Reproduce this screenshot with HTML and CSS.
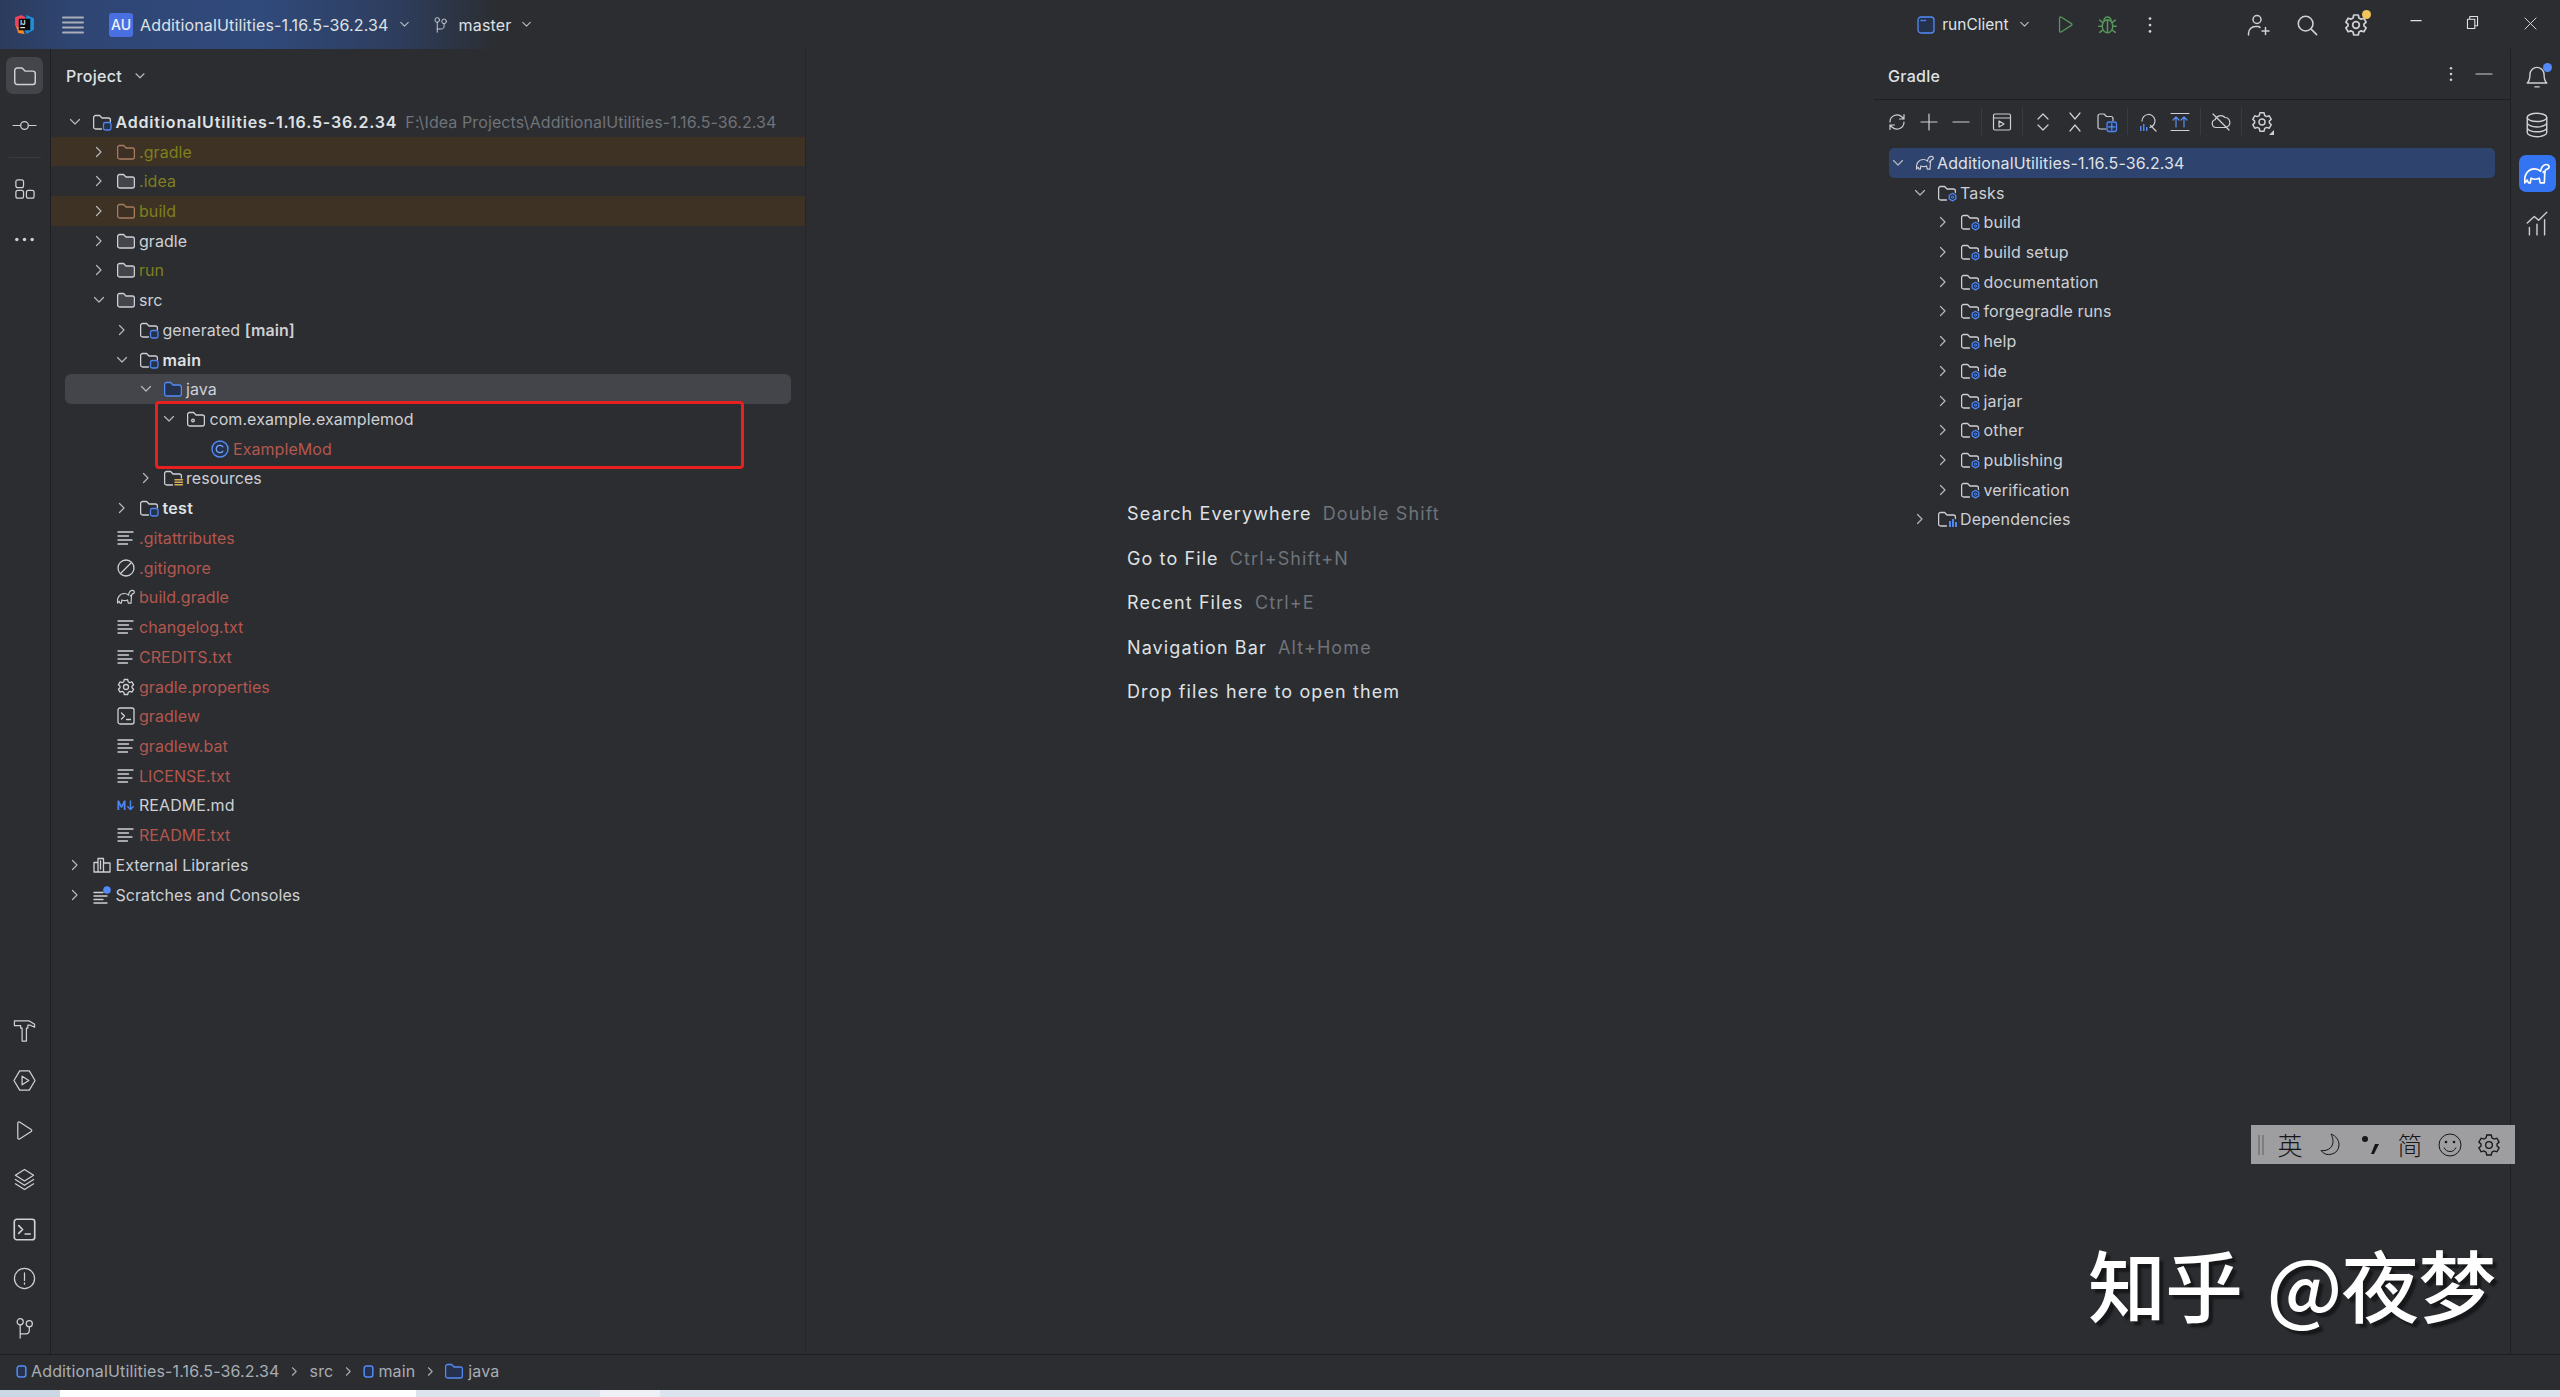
FILE: index.html
```html
<!DOCTYPE html>
<html lang="en">
<head>
<meta charset="utf-8">
<title>AdditionalUtilities</title>
<link rel="stylesheet" href="styles.css">
</head>
<body>
<svg class="defs" xmlns="http://www.w3.org/2000/svg">
  <symbol id="chev-r" viewBox="0 0 18 18"><path d="M6.500 4.500 11 9l-4.500 4.500"/></symbol>
  <symbol id="chev-d" viewBox="0 0 18 18"><path d="M4.500 6.500 9 11l4.500-4.500"/></symbol>
  <symbol id="folder" viewBox="0 0 18 18"><path d="M.6 4.500a2 2 0 0 1 2-2h4L9 5h6.400a2 2 0 0 1 2 2v7a2 2 0 0 1-2 2H2.600a2 2 0 0 1-2-2z"/></symbol>
  <symbol id="mod" viewBox="0 0 20 18"><path d="M8.500 16H2.600a2 2 0 0 1-2-2V4.500a2 2 0 0 1 2-2h4L9 5h6.400a2 2 0 0 1 2 2v1.500"/><rect class="blue" x="10.500" y="9.500" width="7.500" height="7.500" rx="1.800"/></symbol>
  <symbol id="task" viewBox="0 0 20 18"><path d="M8.500 16H2.600a2 2 0 0 1-2-2V4.500a2 2 0 0 1 2-2h4L9 5h6.400a2 2 0 0 1 2 2v1.500"/><path class="blue" d="M14.500 9.300l3.300 1.900v3.800l-3.300 1.900-3.300-1.900v-3.800z"/><circle class="bluedot" cx="14.500" cy="13.100" r="1.100"/></symbol>
  <symbol id="dep" viewBox="0 0 20 18"><path d="M8.500 16H2.600a2 2 0 0 1-2-2V4.500a2 2 0 0 1 2-2h4L9 5h6.400a2 2 0 0 1 2 2v1.500"/><path class="bluebar" d="M11 11h2v6h-2zM14 9h2v8h-2zM17 12h2v5h-2z"/></symbol>
  <symbol id="res" viewBox="0 0 20 18"><path d="M8.500 16H2.600a2 2 0 0 1-2-2V4.500a2 2 0 0 1 2-2h4L9 5h6.400a2 2 0 0 1 2 2v2"/><path class="yellow" d="M11 10.800h7.500M11 13.300h7.500M11 15.800h7.500"/></symbol>
  <symbol id="pkg" viewBox="0 0 18 18"><path d="M.6 4.500a2 2 0 0 1 2-2h4L9 5h6.400a2 2 0 0 1 2 2v7a2 2 0 0 1-2 2H2.600a2 2 0 0 1-2-2z"/><circle cx="6" cy="10.500" r="1.300"/></symbol>
  <symbol id="cls" viewBox="0 0 18 18"><circle class="cls-o" cx="9" cy="9" r="8"/><path class="cls-c" d="M11.800 6.700A3.700 3.700 0 1 0 11.800 11.300"/></symbol>
  <symbol id="txt" viewBox="0 0 18 18"><path d="M1 3h15M1 7h10.500M1 11h14M1 15h9.500"/></symbol>
  <symbol id="ban" viewBox="0 0 18 18"><circle cx="9" cy="9" r="8"/><path d="M3.500 14.500l11-11"/></symbol>
  <symbol id="ele" viewBox="2 4 20.500 17"><path d="M2.500 19.500C2 13 5 8.500 10.500 8.500c2 0 3.500.8 4.500 1.800C15.800 7 17.500 5 19.500 5c1.700 0 2.700 1.400 2 2.800-.5 1-2 .7-2.600 1.700-.9 1.700-.4 5-.9 10h-3.200l-.8-3.700c-2 1-4.500 1-6.500 0l-.5 3.700H5.500l-1-2.200z"/><circle cx="17.500" cy="11" r=".4"/></symbol>
  <symbol id="gear" viewBox="0 0 18 18"><path d="M7.300 1.500h3.400l.5 2.200 1.600.9 2.100-.7 1.700 2.900L15 8.300v1.400l1.600 1.500-1.700 2.900-2.100-.7-1.600.9-.5 2.200H7.300l-.5-2.200-1.600-.9-2.100.7-1.700-2.900L3 9.700V8.300L1.400 6.800l1.700-2.900 2.100.7 1.600-.9z"/><circle cx="9" cy="9" r="2.500"/></symbol>
  <symbol id="term" viewBox="0 0 18 18"><rect x="1" y="1" width="16" height="16" rx="2"/><path d="M4.500 6l3 3-3 3M9.500 12.500h4"/></symbol>
  <symbol id="branch" viewBox="0 0 18 24"><circle cx="4.500" cy="5" r="3.200"/><circle cx="14" cy="7" r="3.200"/><path d="M4.500 8.200V22M4.500 17.500h6c2.500 0 3.500-2 3.500-4v-3.300"/></symbol>
  <symbol id="dots" viewBox="0 0 6 24"><circle class="solid" cx="3" cy="5" r="1.500"/><circle class="solid" cx="3" cy="12" r="1.500"/><circle class="solid" cx="3" cy="19" r="1.500"/></symbol>
  <symbol id="play" viewBox="0 0 20 24"><path d="M3 4.200v15.600c0 1 1 1.500 1.800 1L17 13c.8-.5.800-1.500 0-2L4.800 3.200c-.8-.5-1.800 0-1.800 1z"/></symbol>
</svg>

<div class="app">
  <header class="titlebar">
    <svg class="logo" viewBox="0 0 20 20"><path class="l-a" d="M1 3l6-2 4 2-2 9-5 3-3-4z"/><path class="l-b" d="M12 1l7 3v11l-7 4-2-4z"/><path class="l-c" d="M2 12l6 1 2 6-6-1z"/><rect class="l-d" x="4.500" y="4.500" width="11" height="11"/><text class="l-t" x="6" y="10.500">IJ</text><rect class="l-e" x="6" y="12.500" width="4.500" height="1"/></svg>
    <svg class="burger" viewBox="0 0 20 18"><path d="M0 1.500h20M0 6.500h20M0 11.500h20M0 16.500h20"/></svg>
    <span class="badge">AU</span>
    <span class="title-text project-name">AdditionalUtilities-1.16.5-36.2.34</span>
    <svg class="ico tchev"><use href="#chev-d"/></svg>
    <svg class="ico tbranch"><use href="#branch"/></svg>
    <span class="title-text">master</span>
    <svg class="ico tchev"><use href="#chev-d"/></svg>
    <div class="title-right">
      <svg class="runcfg" viewBox="0 0 18 18"><rect x="1" y="1" width="16" height="16" rx="3"/><path d="M4 4.500h1.500M7 4.500h1.500"/></svg>
      <span class="title-text run-name">runClient</span>
      <svg class="ico tchev"><use href="#chev-d"/></svg>
      <svg class="ico tplay"><use href="#play"/></svg>
      <svg class="tbug" viewBox="0 0 24 24"><ellipse cx="12" cy="14" rx="6" ry="7.500"/><path d="M8 7.500a4 4 0 0 1 8 0M12 7v14M6 14H2M22 14h-4M6.500 9.500 3 7M17.500 9.500 21 7M6.500 18.500 3 21M17.500 18.500 21 21"/></svg>
      <svg class="ico tdots"><use href="#dots"/></svg>
      <svg class="tadd" viewBox="0 0 24 24"><circle cx="11" cy="6.500" r="4"/><path d="M2.500 22v-1.500c0-4 3-7 7-7h2.500c1 0 1.500.3 2 1M16 18h7M19.500 14.500v7"/></svg>
      <svg class="tsearch" viewBox="0 0 24 24"><circle cx="10.500" cy="10.500" r="8"/><path d="M16.500 16.500l6 6"/></svg>
      <span class="gear-wrap"><svg class="ico tgear"><use href="#gear"/></svg><i class="dot-y"></i></span>
      <svg class="wmin" viewBox="0 0 12 12"><path d="M0 3.500h11"/></svg>
      <svg class="wres" viewBox="0 0 12 14"><path d="M.5 3.500h8v10h-8zM3 3.500V.5h8.500v10H8.500"/></svg>
      <svg class="wclose" viewBox="0 0 14 14"><path d="M1 1l12 12M13 1L1 13"/></svg>
    </div>
  </header>

  <div class="workspace">
    <nav class="stripe stripe-left">
      <span class="sbtn on"><svg class="ico s-folder"><use href="#folder"/></svg></span>
      <span class="sbtn"><svg class="sic" viewBox="0 0 24 24"><circle cx="12" cy="12" r="4"/><path d="M0 12h8M16 12h8"/></svg></span>
      <i class="sline"></i>
      <span class="sbtn"><svg class="sic" viewBox="0 0 24 24"><rect x="3" y="2" width="8" height="8" rx="2"/><rect x="3" y="13" width="8" height="8" rx="2"/><rect x="14" y="13" width="8" height="8" rx="2"/></svg></span>
      <span class="sbtn"><svg class="sic" viewBox="0 0 24 24"><circle class="solid" cx="4" cy="12" r="1.800"/><circle class="solid" cx="12" cy="12" r="1.800"/><circle class="solid" cx="20" cy="12" r="1.800"/></svg></span>
      <div class="stripe-bottom">
        <span class="sbtn"><svg class="sic" viewBox="0 0 24 24"><path d="M1.500 2h15.500l5.500 3.500v3L18 6.500h-2.500v3H14V23H9.500V9.500H8V7H1.500z"/></svg></span>
        <span class="sbtn"><svg class="sic" viewBox="0 0 24 24"><path d="M7 2h10l6 10-6 10H7L1 12z"/><path d="M9.500 7.500v9l7-4.500z"/></svg></span>
        <span class="sbtn"><svg class="ico sic"><use href="#play"/></svg></span>
        <span class="sbtn"><svg class="sic" viewBox="0 0 24 24"><path d="M12 1.500l9.500 6-9.500 6-9.500-6zM2.500 12l9.500 6 9.500-6M2.500 16.500l9.500 6 9.500-6"/></svg></span>
        <span class="sbtn"><svg class="ico sic"><use href="#term"/></svg></span>
        <span class="sbtn"><svg class="sic" viewBox="0 0 24 24"><circle cx="12" cy="12" r="10.500"/><path d="M12 6v8M12 16.500v1.500"/></svg></span>
        <span class="sbtn"><svg class="ico sic"><use href="#branch"/></svg></span>
      </div>
    </nav>

    <section class="project">
      <div class="panel-head"><span class="panel-title">Project</span><svg class="ico phead-chev"><use href="#chev-d"/></svg></div>
      <div class="tree">
        <div class="row d0 strong root"><svg class="ico chev"><use href="#chev-d"/></svg><svg class="ico nod w20"><use href="#mod"/></svg><span class="lbl">AdditionalUtilities-1.16.5-36.2.34</span><span class="path">F:\Idea Projects\AdditionalUtilities-1.16.5-36.2.34</span></div>
        <div class="row d1 excl"><svg class="ico chev"><use href="#chev-r"/></svg><svg class="ico nod fold-x"><use href="#folder"/></svg><span class="lbl ign">.gradle</span></div>
        <div class="row d1"><svg class="ico chev"><use href="#chev-r"/></svg><svg class="ico nod fold"><use href="#folder"/></svg><span class="lbl ign">.idea</span></div>
        <div class="row d1 excl"><svg class="ico chev"><use href="#chev-r"/></svg><svg class="ico nod fold-x"><use href="#folder"/></svg><span class="lbl ign">build</span></div>
        <div class="row d1"><svg class="ico chev"><use href="#chev-r"/></svg><svg class="ico nod fold"><use href="#folder"/></svg><span class="lbl">gradle</span></div>
        <div class="row d1"><svg class="ico chev"><use href="#chev-r"/></svg><svg class="ico nod fold"><use href="#folder"/></svg><span class="lbl ign">run</span></div>
        <div class="row d1"><svg class="ico chev"><use href="#chev-d"/></svg><svg class="ico nod fold"><use href="#folder"/></svg><span class="lbl">src</span></div>
        <div class="row d2"><svg class="ico chev"><use href="#chev-r"/></svg><svg class="ico nod w20"><use href="#mod"/></svg><span class="lbl">generated <b class="strong-b">[main]</b></span></div>
        <div class="row d2 strong"><svg class="ico chev"><use href="#chev-d"/></svg><svg class="ico nod w20"><use href="#mod"/></svg><span class="lbl">main</span></div>
        <div class="row d3 sel"><svg class="ico chev"><use href="#chev-d"/></svg><svg class="ico nod fold-src"><use href="#folder"/></svg><span class="lbl">java</span></div>
        <div class="row d4"><svg class="ico chev"><use href="#chev-d"/></svg><svg class="ico nod"><use href="#pkg"/></svg><span class="lbl">com.example.examplemod</span></div>
        <div class="row d5 leaf"><svg class="ico nod"><use href="#cls"/></svg><span class="lbl mod-r">ExampleMod</span></div>
        <div class="row d3"><svg class="ico chev"><use href="#chev-r"/></svg><svg class="ico nod w20"><use href="#res"/></svg><span class="lbl">resources</span></div>
        <div class="row d2 strong"><svg class="ico chev"><use href="#chev-r"/></svg><svg class="ico nod w20"><use href="#mod"/></svg><span class="lbl">test</span></div>
        <div class="row d1 leaf"><svg class="ico nod"><use href="#txt"/></svg><span class="lbl mod-r">.gitattributes</span></div>
        <div class="row d1 leaf"><svg class="ico nod"><use href="#ban"/></svg><span class="lbl mod-r">.gitignore</span></div>
        <div class="row d1 leaf"><svg class="ico nod"><use href="#ele"/></svg><span class="lbl mod-r">build.gradle</span></div>
        <div class="row d1 leaf"><svg class="ico nod"><use href="#txt"/></svg><span class="lbl mod-r">changelog.txt</span></div>
        <div class="row d1 leaf"><svg class="ico nod"><use href="#txt"/></svg><span class="lbl mod-r">CREDITS.txt</span></div>
        <div class="row d1 leaf"><svg class="ico nod"><use href="#gear"/></svg><span class="lbl mod-r">gradle.properties</span></div>
        <div class="row d1 leaf"><svg class="ico nod"><use href="#term"/></svg><span class="lbl mod-r">gradlew</span></div>
        <div class="row d1 leaf"><svg class="ico nod"><use href="#txt"/></svg><span class="lbl mod-r">gradlew.bat</span></div>
        <div class="row d1 leaf"><svg class="ico nod"><use href="#txt"/></svg><span class="lbl mod-r">LICENSE.txt</span></div>
        <div class="row d1 leaf"><svg class="nod md" viewBox="0 0 20 18"><path class="md-m" d="M.5 14.500V4h1.800L5 9.500 7.700 4h1.800v10.500H7.500V8.500L5.700 12H4.300L2.500 8.500v6z"/><path class="md-a" d="M15 4v10M11.500 10.500 15 14l3.500-3.500"/></svg><span class="lbl">README.md</span></div>
        <div class="row d1 leaf"><svg class="ico nod"><use href="#txt"/></svg><span class="lbl mod-r">README.txt</span></div>
        <div class="row d0"><svg class="ico chev"><use href="#chev-r"/></svg><svg class="nod ico" viewBox="0 0 18 18"><path d="M1 16V6.500h4V16M5 16V2.500h5.500V16M10.500 16V7H17v9zM1 16h16M7.500 5v8"/></svg><span class="lbl">External Libraries</span></div>
        <div class="row d0"><svg class="ico chev"><use href="#chev-r"/></svg><svg class="nod ico" viewBox="0 0 18 18"><path d="M1 6.500h9M1 10h13M1 13.500h9M1 17h13"/><circle class="cloc" cx="14" cy="4" r="3.800"/></svg><span class="lbl">Scratches and Consoles</span></div>
      </div>
      <div class="redbox"></div>
    </section>

    <main class="editor">
      <p class="hint">Search Everywhere <span class="key">Double Shift</span></p>
      <p class="hint">Go to File <span class="key">Ctrl+Shift+N</span></p>
      <p class="hint">Recent Files <span class="key">Ctrl+E</span></p>
      <p class="hint">Navigation Bar <span class="key">Alt+Home</span></p>
      <p class="hint">Drop files here to open them</p>
    </main>

    <section class="gradle">
      <div class="panel-head gradle-head"><span class="panel-title">Gradle</span><svg class="ico ghead-dots"><use href="#dots"/></svg><svg class="ghead-min" viewBox="0 0 16 2"><path d="M0 1h16"/></svg></div>
      <div class="gtool">
        <span class="tbtn"><svg class="tic" viewBox="0 0 20 20"><path d="M3 10a7 7 0 0 1 12-5l2 2M17 10a7 7 0 0 1-12 5l-2-2M17 2.500V7h-4.500M3 17.500V13h4.500"/></svg></span>
        <span class="tbtn"><svg class="tic" viewBox="0 0 20 20"><path d="M2 10h16M10 2v16"/></svg></span>
        <span class="tbtn"><svg class="tic" viewBox="0 0 20 20"><path d="M2 10h16"/></svg></span>
        <i class="tsep"></i>
        <span class="tbtn"><svg class="tic" viewBox="0 0 20 20"><rect x="1.500" y="2" width="17" height="16" rx="1.500"/><path d="M1.500 6h17M7 9v6l5-3z"/></svg></span>
        <i class="tsep"></i>
        <span class="tbtn"><svg class="tic" viewBox="0 0 20 20"><path d="M5 7l5-5 5 5M5 13l5 5 5-5"/></svg></span>
        <span class="tbtn"><svg class="tic" viewBox="0 0 20 20"><path d="M5 1l5 6 5-6M5 19l5-6 5 6"/></svg></span>
        <span class="tbtn"><svg class="tic" viewBox="0 0 20 20"><path d="M9 17H3a2 2 0 0 1-2-2V4a2 2 0 0 1 2-2h4l2.500 2.500H14a2 2 0 0 1 2 2v2"/><rect class="blue" x="10" y="10" width="9.500" height="9.500" rx="2"/><path class="bluel" d="M14.800 11.500v6.500M11.500 14.800H18"/></svg></span>
        <i class="tsep"></i>
        <span class="tbtn"><svg class="tic" viewBox="0 0 20 20"><path d="M4 9a6.500 6.500 0 1 1 8 6.300M12.500 13.500l5.500 5.500"/><path class="bluebar" d="M2 14h1.500v5H2zM5 12h1.500v7H5zM8 15h1.500v4H8z"/></svg></span>
        <span class="tbtn"><svg class="tic" viewBox="0 0 20 20"><path d="M1 1.500h18M1 18.500h18"/><path class="bluel" d="M6 15V5M3 8l3-3 3 3M14 15V5M11 8l3-3 3 3"/></svg></span>
        <i class="tsep"></i>
        <span class="tbtn"><svg class="tic" viewBox="0 0 20 20"><path d="M5 15.500a4 4 0 0 1-1-7.800A6 6 0 0 1 14 5.500a5 5 0 0 1 2 9.500c-.5.300-1 .5-1.500.5zM2 2l16 16"/></svg></span>
        <i class="tsep"></i>
        <span class="tbtn tgearbtn"><svg class="ico tic"><use href="#gear"/></svg><i class="tcorner"></i></span>
      </div>
      <div class="gtree">
        <div class="grow g0 gsel"><svg class="ico chev"><use href="#chev-d"/></svg><svg class="ico nod"><use href="#ele"/></svg><span class="lbl">AdditionalUtilities-1.16.5-36.2.34</span></div>
        <div class="grow g1"><svg class="ico chev"><use href="#chev-d"/></svg><svg class="ico nod w20"><use href="#task"/></svg><span class="lbl">Tasks</span></div>
        <div class="grow g2"><svg class="ico chev"><use href="#chev-r"/></svg><svg class="ico nod w20"><use href="#task"/></svg><span class="lbl">build</span></div>
        <div class="grow g2"><svg class="ico chev"><use href="#chev-r"/></svg><svg class="ico nod w20"><use href="#task"/></svg><span class="lbl">build setup</span></div>
        <div class="grow g2"><svg class="ico chev"><use href="#chev-r"/></svg><svg class="ico nod w20"><use href="#task"/></svg><span class="lbl">documentation</span></div>
        <div class="grow g2"><svg class="ico chev"><use href="#chev-r"/></svg><svg class="ico nod w20"><use href="#task"/></svg><span class="lbl">forgegradle runs</span></div>
        <div class="grow g2"><svg class="ico chev"><use href="#chev-r"/></svg><svg class="ico nod w20"><use href="#task"/></svg><span class="lbl">help</span></div>
        <div class="grow g2"><svg class="ico chev"><use href="#chev-r"/></svg><svg class="ico nod w20"><use href="#task"/></svg><span class="lbl">ide</span></div>
        <div class="grow g2"><svg class="ico chev"><use href="#chev-r"/></svg><svg class="ico nod w20"><use href="#task"/></svg><span class="lbl">jarjar</span></div>
        <div class="grow g2"><svg class="ico chev"><use href="#chev-r"/></svg><svg class="ico nod w20"><use href="#task"/></svg><span class="lbl">other</span></div>
        <div class="grow g2"><svg class="ico chev"><use href="#chev-r"/></svg><svg class="ico nod w20"><use href="#task"/></svg><span class="lbl">publishing</span></div>
        <div class="grow g2"><svg class="ico chev"><use href="#chev-r"/></svg><svg class="ico nod w20"><use href="#task"/></svg><span class="lbl">verification</span></div>
        <div class="grow g1"><svg class="ico chev"><use href="#chev-r"/></svg><svg class="ico nod w20"><use href="#dep"/></svg><span class="lbl">Dependencies</span></div>
      </div>
    </section>

    <nav class="stripe stripe-right">
      <span class="sbtn bell"><svg class="sic" viewBox="0 0 24 24"><path d="M3 18.500c2-2 2.500-4 2.500-8a6.500 6.500 0 0 1 13 0c0 4 .5 6 2.500 8zM10 22h4"/></svg><i class="dot-b"></i></span>
      <span class="sbtn"><svg class="sic" viewBox="0 0 24 24"><ellipse cx="12" cy="5" rx="9" ry="3.800"/><path d="M3 5v14c0 2 4 3.800 9 3.800s9-1.800 9-3.800V5M3 10c0 2 4 3.800 9 3.800s9-1.800 9-3.800M3 14.500c0 2 4 3.800 9 3.800s9-1.800 9-3.800"/></svg></span>
      <span class="sbtn active"><svg class="ico sic s-ele"><use href="#ele"/></svg></span>
      <span class="sbtn"><svg class="sic" viewBox="0 0 24 24"><path d="M3 12 9.500 6l4 3.500L21 2M5 23v-7M12 23V13M19 23V9"/></svg></span>
    </nav>
  </div>

  <footer class="statusbar">
    <svg class="crumb-mod" viewBox="0 0 10 12"><rect x="1" y="1" width="8" height="10" rx="2"/></svg>
    <span class="crumb">AdditionalUtilities-1.16.5-36.2.34</span>
    <svg class="ico cchev"><use href="#chev-r"/></svg>
    <span class="crumb">src</span>
    <svg class="ico cchev"><use href="#chev-r"/></svg>
    <svg class="crumb-mod" viewBox="0 0 10 12"><rect x="1" y="1" width="8" height="10" rx="2"/></svg>
    <span class="crumb">main</span>
    <svg class="ico cchev"><use href="#chev-r"/></svg>
    <svg class="ico crumb-fold fold-src"><use href="#folder"/></svg>
    <span class="crumb">java</span>
  </footer>
  <div class="taskstrip"><i class="ts a"></i><i class="ts b"></i><i class="ts c"></i><i class="ts d"></i><i class="ts e"></i></div>

  <div class="ime">
    <i class="grip"></i>
    <span class="ime-t">英</span>
    <svg class="ime-i" viewBox="0 0 24 24"><path d="M13 1c5 2 8 6 8 11a10 10 0 0 1-18 5.500c5 1 12-2 12-9 0-3-1-5.500-2-7.500z"/></svg>
    <svg class="ime-i solid-i" viewBox="0 0 24 24"><circle cx="8" cy="6" r="3"/><path d="M18 11h4l-5 10h-3z"/></svg>
    <span class="ime-t ime-t2">简</span>
    <svg class="ime-i" viewBox="0 0 24 24"><circle cx="12" cy="12" r="11"/><circle class="solid-k" cx="8" cy="9" r="1.300"/><circle class="solid-k" cx="16" cy="9" r="1.300"/><path d="M6 14.500c1.500 3 3.500 4 6 4s4.500-1 6-4"/></svg>
    <svg class="ime-i" viewBox="0 0 18 18"><path d="M7.300 1.500h3.400l.5 2.200 1.600.9 2.100-.7 1.700 2.900L15 8.300v1.400l1.600 1.500-1.700 2.900-2.100-.7-1.600.9-.5 2.200H7.300l-.5-2.200-1.600-.9-2.100.7-1.700-2.900L3 9.700V8.300L1.400 6.800l1.700-2.900 2.100.7 1.600-.9z"/><circle cx="9" cy="9" r="2.500"/></svg>
  </div>
  <div class="watermark">知乎 @夜梦</div>
</div>
</body>
</html>
```

FILE: styles.css
```css
* { box-sizing: border-box; }
html, body { margin: 0; padding: 0; background: #2b2d30; }
body { font-family: Inter, "Noto Sans CJK SC", sans-serif; font-size: 16px; color: #ced0d6; overflow: hidden; }
.defs { position: absolute; width: 0; height: 0; }
.app { position: relative; width: 2560px; height: 1397px; display: flex; flex-direction: column; }
svg { flex: none; display: block; overflow: visible; }
.ico, .sic, .tic, .tadd, .tsearch, .burger, .wmin, .wres, .wclose, .runcfg, .tbug, .crumb-mod, .ghead-min { fill: none; stroke: currentColor; stroke-linecap: round; stroke-linejoin: round; }
.ico { stroke-width: 1.3; width: 18px; height: 18px; }
.solid { fill: currentColor; stroke: none; }
.blue { fill: #25324d; stroke: #4f86f0; stroke-width: 1.3; }
.bluedot { fill: none; stroke: #4f86f0; stroke-width: 1; }
.bluel { stroke: #5b8ff0; fill: none; }
.bluebar { fill: #4f86f0; stroke: none; }
.yellow { stroke: #d6ae58; stroke-width: 1.4; }
.cls-o { stroke: #548af7; fill: #25324d; stroke-width: 1.4; }
.cls-c { stroke: #7aa4f7; stroke-width: 1.3; }
.cloc { fill: #548af7; stroke: none; }

/* title bar */
.titlebar { height: 49px; flex: none; display: flex; align-items: center; background: linear-gradient(90deg, #2c3b5c 0, #2f4674 80px, #304a7c 260px, #2e3d5c 400px, #2b2d30 500px); }
.logo { width: 21px; height: 21px; margin-left: 14px; }
.l-a { fill: #f0435c; stroke: none; }
.l-b { fill: #1e8fd8; stroke: none; }
.l-c { fill: #f58a2b; stroke: none; }
.l-d { fill: #0b0b0d; }
.l-t { fill: #fff; font: 700 5.5px Inter, sans-serif; }
.l-e { fill: #fff; }
.burger { width: 20px; height: 18px; margin-left: 28px; color: #a9aeb8; stroke-width: 2; }
.badge { width: 24px; height: 24px; margin-left: 26px; background: #4a6fe0; border-radius: 3px; color: #eef1fa; font-size: 14px; font-weight: 500; display: flex; align-items: center; justify-content: center; }
.title-text { color: #dfe1e5; font-size: 16px; letter-spacing: .15px; white-space: nowrap; }
.project-name { margin-left: 7px; }
.run-name { font-size: 15.5px; letter-spacing: 0; }
.tchev { color: #b4b8bf; width: 15px; height: 15px; margin-left: 8px; stroke-width: 1.4; }
.tbranch { width: 13px; height: 18px; margin-left: 22px; margin-right: 12px; }
.title-right { margin-left: auto; display: flex; align-items: center; }
.runcfg { width: 18px; height: 18px; margin-right: 7.5px; color: #548af7; fill: #25324d; stroke-width: 1.3; }
.tplay { color: #57965c; width: 17px; height: 21px; margin-left: 25.5px; stroke-width: 1.5; }
.tbug { color: #57965c; width: 21px; height: 21px; margin-left: 23px; stroke-width: 1.7; }
.tdots { width: 6px; height: 22px; margin-left: 29px; }
.tadd { width: 24px; height: 24px; margin-left: 93px; stroke-width: 1.5; }
.tsearch { width: 22px; height: 22px; margin-left: 26px; stroke-width: 1.7; }
.gear-wrap { position: relative; margin-left: 25.5px; display: block; }
.tgear { width: 24px; height: 24px; display: block; }
.dot-y { position: absolute; width: 9px; height: 9px; background: #f2c55c; border-radius: 50%; top: -3px; right: -3px; }
.wmin { width: 11px; height: 12px; margin-left: 43px; margin-top: -4px; stroke-width: 1.4; color: #dfe1e5; }
.wres { width: 11px; height: 13px; margin-left: 45.5px; margin-top: -4px; stroke-width: 1.2; color: #dfe1e5; }
.wclose { width: 13px; height: 13px; margin-left: 46px; margin-right: 23px; margin-top: -2px; stroke-width: 1; color: #dfe1e5; }

/* layout */
.workspace { flex: 1; display: flex; min-height: 0; }
.stripe { width: 51px; flex: none; display: flex; flex-direction: column; align-items: center; gap: 13px; padding-top: 8px; background: #2b2d30; }
.stripe-left { border-right: 1px solid #1e1f22; padding-right: 1px; }
.stripe-right { width: 50px; border-left: 1px solid #1e1f22; gap: 12px; padding-left: 3px; }
.stripe-right .sic { width: 26px; height: 26px; }
.stripe-bottom { margin-top: auto; display: flex; flex-direction: column; gap: 12.6px; padding-bottom: 7px; }
.sbtn { width: 37px; height: 37px; flex: none; border-radius: 7px; display: flex; align-items: center; justify-content: center; color: #ced0d6; position: relative; }
.sbtn.on { background: #43454a; }
.sbtn.active { background: #3574f0; color: #fff; }
.sline { width: 32px; height: 1px; background: #393b40; flex: none; }
.sic { width: 23px; height: 23px; stroke-width: 1.3; }
.s-folder { width: 22px; height: 22px; stroke-width: 1.2; }
.dot-b { position: absolute; width: 9px; height: 9px; background: #548af7; border-radius: 50%; top: 6px; right: 4px; }

/* panels */
.project { width: 755px; flex: none; border-right: 1px solid #25262a; position: relative; }
.panel-head { height: 51px; display: flex; align-items: center; padding: 2px 0 0 15px; }
.panel-title { font-size: 16px; font-weight: 500; color: #dfe1e5; letter-spacing: .3px; }
.phead-chev { width: 16px; height: 16px; margin-left: 10px; color: #b4b8bf; }
.tree { padding-top: 7px; }
.row, .grow { height: 29.72px; display: flex; align-items: center; white-space: nowrap; position: relative; }
.d0 { padding-left: 15px; }
.d1 { padding-left: 38.5px; }
.d2 { padding-left: 62px; }
.d3 { padding-left: 85.5px; }
.d4 { padding-left: 109px; }
.d5 { padding-left: 132.5px; }
.leaf .nod { margin-left: 27px; }
.chev { width: 18px; height: 18px; margin-right: 9px; color: #b4b8bf; stroke-width: 1.2; }
.nod { width: 18px; height: 18px; margin-right: 4.5px; color: #ced0d6; }
.nod.w20 { width: 20px; margin-right: 2.5px; }
.lbl { color: #ced0d6; font-size: 16px; letter-spacing: .06px; }
.strong .lbl { font-weight: 600; color: #dfe1e5; letter-spacing: .3px; }
.root .lbl { letter-spacing: .83px; }
.strong-b { font-weight: 600; }
.path { color: #6f737a; font-size: 16px; letter-spacing: .1px; margin-left: 8px; }
.excl { background: #3d3224; }
.fold { fill: #43454a; color: #ced0d6; }
.fold-x { fill: #3c2f24; color: #a97c60; }
.fold-src { fill: #25324d; color: #548af7; }
.ign { color: #7f7f1e; }
.mod-r { color: #b3574f; }
.sel { background: #43454a; margin: 0 14px; border-radius: 6px; padding-left: 71.5px; }
.md { stroke: none; }
.md-m { fill: #4f86f0; }
.md-a { fill: none; stroke: #4f86f0; stroke-width: 1.6; }
.redbox { position: absolute; left: 103.5px; top: 352px; width: 589px; height: 68px; border: 3px solid #e8201f; border-radius: 4px; }

.editor { flex: 1; min-width: 0; padding: 452px 0 0 321px; background: #2b2d30; }
.hint { margin: 0; height: 44.6px; line-height: 26px; font-size: 18px; letter-spacing: 1.1px; color: #dfe1e5; white-space: nowrap; }
.key { color: #6f737a; margin-left: 5px; }

.gradle { width: 638px; flex: none; position: relative; }
.gradle-head { border-bottom: 1px solid #1e1f22; margin-left: 2px; padding: 3px 0 0 14px; }
.ghead-dots { width: 6px; height: 20px; margin-left: auto; margin-top: -3px; }
.ghead-min { width: 16px; height: 2px; margin-left: 22px; margin-right: 18px; margin-top: -3px; }
.gtool { height: 43px; display: flex; align-items: center; padding-left: 8.5px; }
.tbtn { width: 32px; height: 32px; flex: none; display: flex; align-items: center; justify-content: center; position: relative; }
.tic { width: 20px; height: 20px; stroke-width: 1.2; }
.tgearbtn .tic { width: 22px; height: 22px; }
.tsep { width: 1px; height: 27px; margin: 0 4px; background: #393b40; flex: none; }
.tcorner { position: absolute; right: 4px; bottom: 3px; width: 0; height: 0; border-style: solid; border-width: 0 0 5px 5px; border-color: transparent transparent #ced0d6 transparent; }
.gtree { padding-top: 5px; }
.grow .lbl { color: #ced0d6; letter-spacing: .15px; }
.g1 { padding-left: 38.5px; }
.g2 { padding-left: 62px; }
.gsel { background: #2e436e; margin: 0 15px 0 17px; border-radius: 5px; }
.gsel .nod { margin-right: 3px; }
.gsel .lbl { color: #dfe1e5; letter-spacing: .12px; }

/* status */
.statusbar { height: 36px; flex: none; border-top: 1px solid #1e1f22; background: #2b2d30; display: flex; align-items: center; padding: 0 0 3px 16px; }
.crumb { font-size: 16px; letter-spacing: .15px; color: #a8adb5; white-space: nowrap; }
.crumb-mod { width: 11px; height: 13px; color: #548af7; fill: #25324d; stroke-width: 1.4; margin-right: 4px; }
.cchev { width: 15px; height: 15px; color: #a8adb5; margin: 0 7.5px; stroke-width: 1.3; }
.crumb-fold { width: 18px; height: 18px; margin-right: 5px; }
.taskstrip { height: 7px; flex: none; display: flex; }
.ts { display: block; height: 7px; }
.ts.a { width: 60px; background: #cbd7e4; }
.ts.b { width: 356px; background: #fff; }
.ts.c { width: 184px; background: #dde4ee; }
.ts.d { width: 60px; background: #eef0f6; }
.ts.e { flex: 1; background: #dbe4ef; }

/* overlays */
.ime { position: absolute; left: 2251px; top: 1125px; width: 264px; height: 39px; background: #9e9ea1; display: flex; align-items: center; color: #17171a; }
.grip { width: 6px; height: 20px; margin-left: 7px; border-left: 2px solid #7d7d80; border-right: 2px solid #7d7d80; }
.ime-t { font-size: 25px; font-family: "Noto Sans CJK SC", sans-serif; font-weight: 300; line-height: 1; width: 26px; text-align: center; margin-left: 13px; }
.ime-t2 { margin-left: 16px; }
.ime-i { width: 24px; height: 24px; margin-left: 15px; fill: none; stroke: #17171a; stroke-width: 1; }
.solid-i { fill: #17171a; stroke: none; }
.solid-k { fill: #17171a; stroke: none; }
.watermark { position: absolute; left: 2088px; top: 1231px; font-family: "Noto Sans CJK SC", sans-serif; font-weight: 500; font-size: 78px; line-height: 104px; letter-spacing: -1px; word-spacing: 8px; color: #fff; text-shadow: 4px 4px 2px #17181a; white-space: nowrap; }
```
